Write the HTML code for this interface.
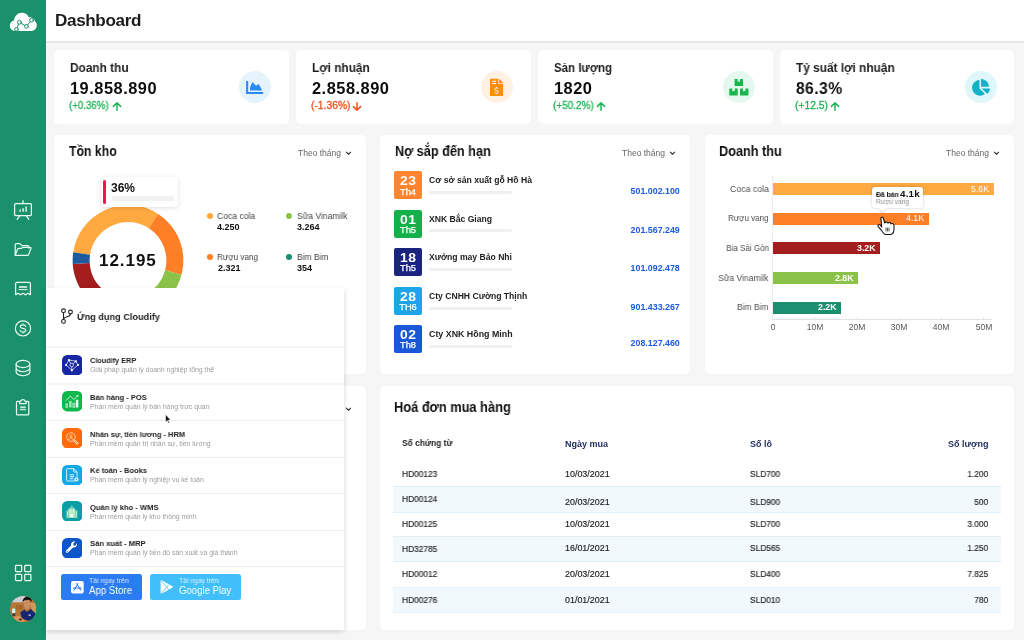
<!DOCTYPE html>
<html lang="vi">
<head>
<meta charset="utf-8">
<title>Dashboard</title>
<style>
*{box-sizing:border-box;margin:0;padding:0}
html,body{width:1024px;height:640px;overflow:hidden}
body{font-family:"Liberation Sans",sans-serif;background:#f6f6f6;color:#111;position:relative}
.abs{position:absolute}
.t{will-change:transform;position:absolute;white-space:nowrap;line-height:1;transform:scaleX(var(--sx,1));transform-origin:left center}
.t.r{transform-origin:right center}
.b{font-weight:700}
#side{left:0;top:0;width:46px;height:640px;background:#1a906b}
#head{left:46px;top:0;width:978px;height:43px;background:#fff;border-bottom:2px solid #e7e7e7}
.card{position:absolute;background:#fff;border-radius:5px}
.kpi{top:50px;width:235px;height:74px}
.kc{position:absolute;top:21px;width:32px;height:32px;border-radius:50%}
.panel-title{font-size:14.5px;font-weight:700;color:#111}
.sel{font-size:8.5px;color:#666}
.dot{position:absolute;width:6px;height:6px;border-radius:50%}
.lg{font-size:9px;color:#444}
.lgv{font-size:9px;font-weight:700;color:#111}
.dbox{position:absolute;left:14px;width:28px;height:28px;border-radius:2px;color:#fff;text-align:center}
.dbox b{will-change:transform;display:block;font-size:12.200px;line-height:10px;margin-top:5.200px;letter-spacing:.6px;transform:scaleX(1.14);padding-left:.6px}
.dbox span{will-change:transform;display:block;font-size:8.600px;line-height:9px;margin-top:1.100px;transform:scaleX(1.08);-webkit-text-stroke:.25px #fff}
.dn{font-size:8.600px;font-weight:700;color:#222;left:48.900px}
.dbar{position:absolute;left:49px;width:83px;height:3px;background:#f0f0f0;border-radius:2px}
.amt{font-size:8.600px;font-weight:700;color:#1a5be0;right:10px;--sx:1.03}
.bl{font-size:9px;color:#4f4f4f;right:245.200px;--sx:.94}
.bar{position:absolute;height:12px}
.bv{will-change:transform;position:absolute;right:4.600px;top:1.900px;font-size:8.800px;color:#fff;line-height:9px}
.ax{font-size:8.500px;color:#555}
#pop{left:46px;top:288px;width:298px;height:342px;background:#fff;box-shadow:0 1.500px 5px rgba(0,0,0,.17)}
.row{position:absolute;left:0;width:298px;height:37px;border-top:1px solid #ececec}
.ai{position:absolute;left:15px;top:8px;width:21px;height:21px;border-radius:5px}
.an{position:absolute;left:44px;top:9px;font-size:8.5px;font-weight:700;color:#222;white-space:nowrap;line-height:1}
.as{position:absolute;left:44px;top:19px;font-size:7.2px;color:#9a9a9a;white-space:nowrap;line-height:1}
.th{font-size:9px;font-weight:700;color:#1d2b5e}
.td{font-size:8.500px;color:#222;--sx:.98;margin-top:.6px;-webkit-text-stroke:.15px #222}
.td.d{--sx:1.05}
.tr{position:absolute;left:14px;width:607px;height:25px}
.tr.s{background:#f1f8fe;border-top:1px solid #dcecf8;border-bottom:1px solid #dcecf8}
</style>
</head>
<body>
<!-- SIDEBAR -->
<div id="side" class="abs">
<svg class="abs" style="left:0;top:0" width="46" height="640" viewBox="0 0 46 640" fill="none" stroke="#eafaf3" stroke-width="1.25" stroke-linecap="round" stroke-linejoin="round">
<!-- logo cloud -->
<path d="M15.5 31 C11.8 31 9.8 28.3 9.8 25.6 C9.8 22.9 11.6 20.9 14 20.5 C14.6 16 17.8 12.8 21.8 12.8 C25.2 12.8 27.6 14.6 28.8 17.2 C32.2 16.8 34.6 18.6 35 21.2 C36.4 22.2 36.8 24 36.8 25.6 C36.8 28.6 34.4 31 31.4 31 Z" fill="#fff" stroke="none"/>
<g stroke="#1a906b" stroke-width="1" fill="#fff">
<path d="M16.4 29.2 L19.4 22.4 L26.4 26.4 L31.4 20.2" fill="none"/>
<circle cx="16.400" cy="29.300" r="1.800"/><circle cx="19.400" cy="22.300" r="1.900"/><circle cx="26.400" cy="26.400" r="1.900"/><circle cx="31.500" cy="20.200" r="1.900"/>
</g>
<!-- presentation -->
<rect x="14.6" y="203.6" width="16.8" height="12" rx="1"/>
<path d="M23 200.6v3M19.6 215.8l-2.4 3.6M26.4 215.8l2.4 3.6"/>
<path d="M20.1 209.4v2.4M23.1 208.2v3.6M26.1 206.6v5.200" stroke-width="1.600" stroke-linecap="butt" stroke="#cfeee2"/>
<!-- folder -->
<path d="M15.2 253.500V244.800c0-.7.500-1.200 1.200-1.200h3.400l2 2h5.800c.7 0 1.200.5 1.200 1.200v1.400"/>
<path d="M15.100 255.200l2.500-6c.2-.5.600-.8 1.100-.8l2.900-.1 1.600-1h6.800c.8 0 1.200.6.900 1.300l-2.300 6c-.2.500-.600.800-1.100.8H16c-.7 0-1.100-.5-.9-1.200z"/>
<!-- receipt -->
<path d="M15.600 294.600V283.800c0-.8.600-1.400 1.400-1.400h12c.8 0 1.400.6 1.400 1.400v10.800c-.8 0-1.200-1.100-2.470-1.100s-1.670 1.100-2.470 1.100-1.200-1.100-2.460-1.100-1.670 1.100-2.470 1.100-1.200-1.100-2.470-1.100-1.660 1.100-2.460 1.100z"/>
<path d="M19 287h8" stroke-width="1.800" stroke-linecap="butt" stroke="#cfeee2"/><path d="M19 289.600h8" stroke-width="1"/>
<!-- dollar -->
<circle cx="23" cy="328.400" r="7.600" stroke-width="1.150"/>
<path d="M25.700 326.500c-.3-1-1.300-1.600-2.700-1.600-1.600 0-2.700.7-2.700 1.800 0 2.400 5.500 1 5.500 3.500 0 1.200-1.200 1.900-2.800 1.900-1.500 0-2.600-.6-2.900-1.700M23 323.900v1M23 332.100v1" stroke-width="1.100"/>
<!-- database -->
<ellipse cx="23" cy="364" rx="6.900" ry="3.700" stroke-width="1.150"/>
<path d="M16.100 364v8c0 2 3.100 3.700 6.900 3.700s6.900-1.700 6.900-3.700v-8M16.100 368c0 2 3.100 3.700 6.900 3.700s6.900-1.700 6.900-3.700" stroke-width="1.150"/>
<!-- clipboard -->
<path d="M19.600 401.400h-2.200c-.5 0-.9.400-.9.900v11.700c0 .5.400.9.900.9h10.500c.5 0 .9-.4.900-.9v-11.700c0-.5-.4-.9-.9-.9h-2.200"/>
<path d="M19.600 403.500v-1.700c0-.3.200-.5.500-.5h.6c.3-1.100 1.200-1.800 2.200-1.800s1.900.7 2.200 1.800h.6c.3 0 .5.200.5.500v1.700z"/>
<path d="M20.200 407.300h5.500" stroke-width="1.800" stroke-linecap="butt" stroke="#cfeee2"/><path d="M20.200 409.700h5.500" stroke-width="1"/>
<!-- grid -->
<g stroke-width="1.250"><rect x="15.500" y="565.400" width="6.200" height="6.200" rx=".8"/><rect x="24.700" y="565.400" width="6.200" height="6.200" rx=".8"/><rect x="15.500" y="574.400" width="6.200" height="6.200" rx=".8"/><rect x="24.700" y="574.400" width="6.200" height="6.200" rx=".8"/></g>
</svg>
<!-- avatar -->
<svg class="abs" style="left:9.900px;top:596px" width="26.400" height="26.400" viewBox="0 0 26.400 26.400">
<defs><clipPath id="av"><circle cx="13.200" cy="13.200" r="13.200"/></clipPath><filter id="avb" x="-10%" y="-10%" width="120%" height="120%"><feGaussianBlur stdDeviation=".45"/></filter></defs>
<g clip-path="url(#av)"><g filter="url(#avb)">
<rect x="-2" y="-2" width="31" height="31" fill="#b87638"/>
<path d="M-2 -2h17v8.300H-2z" fill="#cfccd6"/>
<path d="M20 7h9v9l-6 1z" fill="#d29a5a"/>
<path d="M6 9h7v5H6z" fill="#a9682f"/>
<ellipse cx="17.100" cy="8.600" rx="3.200" ry="4.700" fill="#c98b5f"/>
<path d="M12.700 6.400c-.4-3.300 1.700-5.300 4.700-5.300 2.900 0 4.800 1.800 4.300 5.200-.6-1.500-1.500-2.500-4.300-2.500-2.300 0-3.700.9-4.700 2.600z" fill="#15110f"/>
<path d="M10.300 16.400l4.200-2.800 2.400 2.300 3.700-2.800 4.700 3.800-.9 5.600-6.100 2.300-6.600-2.300z" fill="#14256f"/>
<path d="M18.500 18.500h2.300v1.300h-2.300z" fill="#c9d2ea"/>
<rect x="2.100" y="12.600" width="3.100" height="4.800" rx=".5" fill="#dfe9f2"/>
<rect x="2.400" y="17.300" width="2.800" height="2.800" fill="#3b3a3e"/>
<path d="M4 21c3-1.500 6-1 8 1l3 3-3 3H5z" fill="#d8945c"/>
<rect x="9.300" y="22.600" width="2.200" height="1.700" fill="#16120f"/>
</g></g></svg>
</div>
<!-- HEADER -->
<div id="head" class="abs"><span class="t b" style="left:9px;top:11.700px;font-size:17.100px;letter-spacing:-.36px;color:#1c1c1c">Dashboard</span></div>

<!-- KPI CARDS -->
<div class="card kpi" style="left:54px" id="k1"><span class="t b" style="left:16px;top:11.900px;font-size:12.500px;color:#1c1c1c;--sx:.948">Doanh thu</span><span class="t b" style="left:16px;top:30.200px;font-size:16.400px;color:#0d0d0d;letter-spacing:.5px">19.858.890</span><span class="t" style="left:15.300px;top:51px;font-size:10.300px;color:#1cb454;-webkit-text-stroke:.3px #1cb454;--sx:.94">(+0.36%)</span><svg class="abs" style="left:57.700px;top:51.700px" width="10" height="9" viewBox="0 0 10 9" fill="none" stroke="#1cb454" stroke-width="1.500" stroke-linecap="round" stroke-linejoin="round"><path d="M5 8.200V1M1.400 4.400L5 .9l3.600 3.500"/></svg><div class="kc" style="left:185px;background:#e5f3fd"><svg width="32" height="32" viewBox="0 0 32 32" fill="#2a8bf5"><path d="M7.100 10h2.100v10.900h15v2H7.100z"/><path d="M11 19.400V16.300L13.500 11l3.500 3.750L19.750 13l3.450 6.400z"/></svg></div></div>
<div class="card kpi" style="left:296px" id="k2"><span class="t b" style="left:16px;top:11.900px;font-size:12.500px;color:#1c1c1c;--sx:.948">Lợi nhuận</span><span class="t b" style="left:16px;top:30.200px;font-size:16.400px;color:#0d0d0d;letter-spacing:.5px">2.858.890</span><span class="t" style="left:15.300px;top:51px;font-size:10.300px;color:#f4511e;-webkit-text-stroke:.3px #f4511e;--sx:1">(-1.36%)</span><svg class="abs" style="left:56.400px;top:51.700px" width="10" height="9" viewBox="0 0 10 9" fill="none" stroke="#f4511e" stroke-width="1.500" stroke-linecap="round" stroke-linejoin="round"><path d="M5 .8V8M1.400 4.600L5 8.100l3.600-3.500"/></svg><div class="kc" style="left:185px;background:#fff1e2"><svg width="32" height="32" viewBox="0 0 32 32" fill="#ff8d0a"><path d="M9.600 7.750H17.200V12.300c0 .4.300.7.700.7H22.100V24.400c0 .3-.3.600-.6.600H9.600c-.3 0-.6-.3-.6-.6V8.350c0-.3.300-.6.600-.6z"/><path d="M18 7.750l4.100 4.100v.3H18z"/><path d="M11.300 9.800h3.700v1h-3.700zM11.300 12h3.700v1h-3.700z" fill="#fff"/><path d="M17.200 17.900c-.3-.6-.9-.9-1.700-.9-1 0-1.700.5-1.700 1.300 0 1.700 3.500.8 3.500 2.600 0 .8-.7 1.300-1.800 1.300-.9 0-1.600-.4-1.800-1M15.550 16v1M15.550 22.200v1" fill="none" stroke="#fff" stroke-width="1"/></svg></div></div>
<div class="card kpi" style="left:538px" id="k3"><span class="t b" style="left:16px;top:11.900px;font-size:12.500px;color:#1c1c1c;--sx:.92">Sản lượng</span><span class="t b" style="left:16px;top:30.200px;font-size:16.400px;color:#0d0d0d;letter-spacing:.5px">1820</span><span class="t" style="left:15.300px;top:51px;font-size:10.300px;color:#1cb454;-webkit-text-stroke:.3px #1cb454;--sx:.965">(+50.2%)</span><svg class="abs" style="left:57.700px;top:51.700px" width="10" height="9" viewBox="0 0 10 9" fill="none" stroke="#1cb454" stroke-width="1.500" stroke-linecap="round" stroke-linejoin="round"><path d="M5 8.200V1M1.400 4.400L5 .9l3.600 3.500"/></svg><div class="kc" style="left:185px;background:#e5f8ee"><svg width="32" height="32" viewBox="0 0 32 32" fill="#15b74c"><path d="M11.60 8.10h3v2.900l1.200-.8 1.200.8v-2.900h3v6.900h-8.400zM6.30 17.60h3v2.900l1.200-.8 1.200.8v-2.900h3v6.900h-8.400zM17.00 17.60h3v2.900l1.200-.8 1.200.8v-2.900h3v6.900h-8.400z"/></svg></div></div>
<div class="card kpi" style="left:780px;width:234px" id="k4"><span class="t b" style="left:16px;top:11.900px;font-size:12.500px;color:#1c1c1c;--sx:.948">Tỷ suất lợi nhuận</span><span class="t b" style="left:16px;top:30.200px;font-size:16.400px;color:#0d0d0d;letter-spacing:.5px;--sx:.95">86.3%</span><span class="t" style="left:15.300px;top:51px;font-size:10.300px;color:#1cb454;-webkit-text-stroke:.3px #1cb454;--sx:1">(+12.5)</span><svg class="abs" style="left:50.200px;top:51.700px" width="10" height="9" viewBox="0 0 10 9" fill="none" stroke="#1cb454" stroke-width="1.500" stroke-linecap="round" stroke-linejoin="round"><path d="M5 8.200V1M1.400 4.400L5 .9l3.600 3.500"/></svg><div class="kc" style="left:185px;background:#dff6fb"><svg width="32" height="32" viewBox="0 0 32 32" fill="#10b4c8"><g transform="translate(7.100 7.900) scale(.0329)"><path d="M527.790 288H290.500l158.030 158.030c6.040 6.040 15.980 6.530 22.190.68 38.700-36.460 65.320-85.610 73.130-140.860 1.340-9.460-6.510-17.850-16.060-17.850zm-15.830-64.800C503.720 103.740 408.260 8.280 288.800.04 279.680-.59 272 7.100 272 16.240V240h223.770c9.140 0 16.820-7.680 16.190-16.800zM224 288V50.710c0-9.550-8.390-17.400-17.840-16.060C86.990 51.490-4.100 155.600.14 280.370 4.500 408.510 114.830 513.590 243.030 511.980c50.400-.63 96.970-16.870 135.260-44.030 7.900-5.600 8.420-17.230 1.570-24.080L224 288z"/></g></svg></div></div>

<!-- PANELS -->
<div class="card" id="p1" style="left:54px;top:135px;width:312px;height:239px"><span class="t b" style="left:15.400px;top:9.500px;font-size:13.800px;--sx:.89">Tồn kho</span><span class="t sel" style="left:244px;top:13.800px">Theo tháng</span><svg class="abs" style="left:290.600px;top:16.400px" width="7" height="5" viewBox="0 0 7 5" fill="none" stroke="#222" stroke-width="1.050" stroke-linecap="round" stroke-linejoin="round"><path d="M1.400 1.200l2.100 2.100 2.100-2.100"/></svg><svg class="abs" style="left:0;top:0" width="312" height="239" viewBox="0 0 312 239"><path d="M27.62 118.47A46.90 46.90 0 0 1 99.54 86.07" stroke="#ffa940" stroke-width="17" fill="none"/><path d="M99.54 86.07A46.90 46.90 0 0 1 119.30 137.54" stroke="#ff7f27" stroke-width="17" fill="none"/><path d="M119.30 137.54A46.90 46.90 0 0 1 96.02 166.81" stroke="#8bc34a" stroke-width="17" fill="none"/><path d="M96.02 166.81A46.90 46.90 0 0 1 83.75 171.28" stroke="#1a9070" stroke-width="17" fill="none"/><path d="M83.75 171.28A46.90 46.90 0 0 1 27.20 128.51" stroke="#a41e1e" stroke-width="17" fill="none"/><path d="M27.20 128.51A46.90 46.90 0 0 1 27.62 118.47" stroke="#1e5a9e" stroke-width="17" fill="none"/></svg><span class="t b" style="left:44.600px;top:117.300px;font-size:17px;letter-spacing:.95px;color:#111">12.195</span><div class="abs" style="left:47px;top:42px;width:77px;height:30px;background:#fff;border-radius:3px;box-shadow:0 1px 4px rgba(0,0,0,.13)"><div class="abs" style="left:2px;top:3px;width:3px;height:24px;border-radius:1.500px;background:#f5134a"></div><span class="t b" style="left:9.600px;top:5.400px;font-size:12px;color:#111">36%</span><div class="abs" style="left:10.500px;top:19px;width:62.500px;height:5px;border-radius:1.500px;background:#f1f1f1"></div></div><div class="dot" style="left:152.500px;top:77.500px;background:#ffa940"></div><span class="t lg" style="left:163px;top:77.100px;--sx:.955">Coca cola</span><span class="t lgv" style="left:162.500px;top:87.500px;letter-spacing:0">4.250</span><div class="dot" style="left:231.500px;top:77.500px;background:#8bc34a"></div><span class="t lg" style="left:242.700px;top:77.100px;--sx:.943">Sữa Vinamilk</span><span class="t lgv" style="left:243px;top:87.500px;letter-spacing:0">3.264</span><div class="dot" style="left:152.500px;top:118.500px;background:#ff7f27"></div><span class="t lg" style="left:163px;top:118.100px;--sx:.9">Rượu vang</span><span class="t lgv" style="left:163.500px;top:128.500px;letter-spacing:0">2.321</span><div class="dot" style="left:231.500px;top:118.500px;background:#1a9070"></div><span class="t lg" style="left:242.700px;top:118.100px;--sx:.94">Bim Bim</span><span class="t lgv" style="left:243px;top:128.500px;letter-spacing:0">354</span></div>
<div class="card" id="p2" style="left:380px;top:135px;width:310px;height:239px"><span class="t b" style="left:14.500px;top:9.500px;font-size:13.800px;--sx:.92">Nợ sắp đến hạn</span><span class="t sel" style="left:242.300px;top:13.800px">Theo tháng</span><svg class="abs" style="left:289.100px;top:16.400px" width="7" height="5" viewBox="0 0 7 5" fill="none" stroke="#222" stroke-width="1.050" stroke-linecap="round" stroke-linejoin="round"><path d="M1.400 1.200l2.100 2.100 2.100-2.100"/></svg><div class="dbox" style="top:36.3px;background:#ff8430"><b>23</b><span>Th4</span></div><span class="t dn" style="top:41.47px">Cơ sở sản xuất gỗ Hồ Hà</span><div class="dbar" style="top:55.8px"></div><span class="t r amt" style="top:51.82px">501.002.100</span><div class="dbox" style="top:74.8px;background:#16b04a"><b>01</b><span>Th5</span></div><span class="t dn" style="top:79.97px">XNK Bắc Giang</span><div class="dbar" style="top:94.3px"></div><span class="t r amt" style="top:91.42px">201.567.249</span><div class="dbox" style="top:113.0px;background:#1a237e"><b>18</b><span>Th5</span></div><span class="t dn" style="top:118.17px">Xưởng may Bảo Nhi</span><div class="dbar" style="top:132.5px"></div><span class="t r amt" style="top:128.72px">101.092.478</span><div class="dbox" style="top:151.7px;background:#1ea5e9"><b>28</b><span>TH6</span></div><span class="t dn" style="top:156.87px">Cty CNHH Cường Thịnh</span><div class="dbar" style="top:172px"></div><span class="t r amt" style="top:167.92px">901.433.267</span><div class="dbox" style="top:190.0px;background:#1857d8"><b>02</b><span>Th8</span></div><span class="t dn" style="top:195.17px;--sx:1.03">Cty XNK Hồng Minh</span><div class="dbar" style="top:209.5px"></div><span class="t r amt" style="top:203.62px">208.127.460</span></div>
<div class="card" id="p3" style="left:705px;top:135px;width:309px;height:239px"><span class="t b" style="left:14.200px;top:9.500px;font-size:13.800px;--sx:.92">Doanh thu</span><span class="t sel" style="left:241.200px;top:13.800px">Theo tháng</span><svg class="abs" style="left:288.100px;top:16.400px" width="7" height="5" viewBox="0 0 7 5" fill="none" stroke="#222" stroke-width="1.050" stroke-linecap="round" stroke-linejoin="round"><path d="M1.400 1.200l2.100 2.100 2.100-2.100"/></svg><div class="abs" style="left:67px;top:41px;width:1px;height:143px;background:#ececec"></div><div class="abs" style="left:67px;top:184px;width:220px;height:1px;background:#e2e2e2"></div><div class="abs" style="left:67.3px;top:182px;width:1px;height:2px;background:#e2e2e2"></div><div class="abs" style="left:109.4px;top:182px;width:1px;height:2px;background:#e2e2e2"></div><div class="abs" style="left:151.6px;top:182px;width:1px;height:2px;background:#e2e2e2"></div><div class="abs" style="left:193.8px;top:182px;width:1px;height:2px;background:#e2e2e2"></div><div class="abs" style="left:235.9px;top:182px;width:1px;height:2px;background:#e2e2e2"></div><div class="abs" style="left:278.1px;top:182px;width:1px;height:2px;background:#e2e2e2"></div><span class="t r bl" style="top:50.08px;--sx:.975">Coca cola</span><div class="bar" style="left:67.500px;top:48.1px;width:221.4px;background:#ffa940"><span class="bv">5.6K</span></div><span class="t r bl" style="top:79.48px;--sx:.89">Rượu vang</span><div class="bar" style="left:67.500px;top:77.5px;width:156.6px;background:#ff7f27"><span class="bv">4.1K</span></div><span class="t r bl" style="top:108.88px;--sx:.89">Bia Sài Gòn</span><div class="bar" style="left:67.500px;top:106.9px;width:107.6px;background:#a41e1e"><span class="bv" style="font-weight:700">3.2K</span></div><span class="t r bl" style="top:138.98px">Sữa Vinamilk</span><div class="bar" style="left:67.500px;top:137.0px;width:85.5px;background:#8bc34a"><span class="bv" style="font-weight:700">2.8K</span></div><span class="t r bl" style="top:168.48px">Bim Bim</span><div class="bar" style="left:67.500px;top:166.5px;width:68.8px;background:#1a9070"><span class="bv" style="font-weight:700">2.2K</span></div><span class="t ax" style="left:67.8px;top:188.300px;width:40px;text-align:center;margin-left:-20px;transform-origin:center">0</span><span class="t ax" style="left:109.9px;top:188.300px;width:40px;text-align:center;margin-left:-20px;transform-origin:center">10M</span><span class="t ax" style="left:152.1px;top:188.300px;width:40px;text-align:center;margin-left:-20px;transform-origin:center">20M</span><span class="t ax" style="left:194.2px;top:188.300px;width:40px;text-align:center;margin-left:-20px;transform-origin:center">30M</span><span class="t ax" style="left:236.4px;top:188.300px;width:40px;text-align:center;margin-left:-20px;transform-origin:center">40M</span><span class="t ax" style="left:278.6px;top:188.300px;width:40px;text-align:center;margin-left:-20px;transform-origin:center">50M</span><div class="abs" style="left:167px;top:52px;width:51px;height:21px;background:#fff;border-radius:3px;box-shadow:0 0 3px rgba(0,0,0,.22)"><div class="abs" style="left:8px;top:18.500px;width:5px;height:5px;background:#fff;transform:rotate(45deg);box-shadow:1px 1px 1.500px rgba(0,0,0,.15)"></div><div class="abs" style="left:2px;top:14px;width:20px;height:7px;background:#fff"></div><span class="t b" style="left:3.800px;top:4.100px;font-size:7.400px;color:#111;--sx:.92">Đã bán</span><span class="t b" style="left:28px;top:2px;font-size:9.800px;color:#111;letter-spacing:.2px">4.1k</span><span class="t" style="left:3.800px;top:12.100px;font-size:6.800px;color:#8e8e8e;--sx:.96">Rượu vang</span></div><svg class="abs" style="left:172px;top:81px" width="19" height="20" viewBox="0 0 19 20"><path d="M4.700 11L3.900 2.600C3.800 1.200 5.900.8 6.300 2.200L7.700 7C8.600 5.400 10.600 5.600 10.900 7.200 11.800 6 13.600 6.400 13.900 7.900 15 7 16.900 7.600 17 9.400V14C17 16 15.800 17.600 14.400 18.400H7.800C6.400 17.400 4.600 14.600 3.600 13.400L1.200 10.600C.4 9.400 1.800 8 3 8.800z" fill="#fff" stroke="#111" stroke-width="1.050" stroke-linejoin="round"/><path d="M9 11.600v3.800M10.500 11.600v3.800M12 11.600v3.800" stroke="#111" stroke-width=".7" fill="none"/></svg></div>
<div class="card" id="p4" style="left:54px;top:386px;width:312px;height:244px"><span class="t sel" style="left:244px;top:18.800px">Theo tháng</span><svg class="abs" style="left:290.600px;top:21.400px" width="7" height="5" viewBox="0 0 7 5" fill="none" stroke="#222" stroke-width="1.050" stroke-linecap="round" stroke-linejoin="round"><path d="M1.400 1.200l2.100 2.100 2.100-2.100"/></svg></div>
<div class="card" id="p5" style="left:380px;top:386px;width:634px;height:244px"><span class="t b" style="left:13.500px;top:14.900px;font-size:13.800px;--sx:.93">Hoá đơn mua hàng</span><div class="abs" style="left:13px;top:100.4px;width:608px;height:26.800px;background:#f2f9fd;border-top:1px solid #e2eff8;border-bottom:1px solid #e2eff8"></div><div class="abs" style="left:13px;top:150.4px;width:608px;height:25.4px;background:#f2f9fd;border-top:1px solid #e2eff8;border-bottom:1px solid #e2eff8"></div><div class="abs" style="left:13px;top:201.0px;width:608px;height:25.6px;background:#f2f9fd;border-top:1px solid #e2eff8;border-bottom:1px solid #e2eff8"></div><span class="t th" style="left:22.100px;top:52.48px;color:#222;--sx:.935;margin-top:.4px">Số chứng từ</span><span class="t th" style="left:184.700px;top:54.38px">Ngày mua</span><span class="t th" style="left:369.500px;top:54.38px">Số lô</span><span class="t r th" style="right:25.6px;top:54.18px">Số lượng</span><span class="t td" style="left:22.100px;top:83.40px">HD00123</span><span class="t td d" style="left:184.700px;top:83.00px">10/03/2021</span><span class="t td" style="left:369.500px;top:83.00px">SLD700</span><span class="t r td" style="right:25.8px;top:83.00px">1.200</span><span class="t td" style="left:22.100px;top:108.70px">HD00124</span><span class="t td d" style="left:184.700px;top:111.00px">20/03/2021</span><span class="t td" style="left:369.500px;top:111.00px">SLD900</span><span class="t r td" style="right:25.8px;top:111.00px">500</span><span class="t td" style="left:22.100px;top:133.80px">HD00125</span><span class="t td d" style="left:184.700px;top:133.80px">10/03/2021</span><span class="t td" style="left:369.500px;top:133.80px">SLD700</span><span class="t r td" style="right:25.8px;top:133.80px">3.000</span><span class="t td" style="left:22.100px;top:158.00px">HD32785</span><span class="t td d" style="left:184.700px;top:157.80px">16/01/2021</span><span class="t td" style="left:369.500px;top:157.80px">SLD565</span><span class="t r td" style="right:25.8px;top:157.80px">1.250</span><span class="t td" style="left:22.100px;top:183.80px">HD00012</span><span class="t td d" style="left:184.700px;top:183.50px">20/03/2021</span><span class="t td" style="left:369.500px;top:183.50px">SLD400</span><span class="t r td" style="right:25.8px;top:183.50px">7.825</span><span class="t td" style="left:22.100px;top:209.30px">HD00276</span><span class="t td d" style="left:184.700px;top:209.00px">01/01/2021</span><span class="t td" style="left:369.500px;top:209.00px">SLD010</span><span class="t r td" style="right:25.8px;top:209.00px">780</span></div>

<!-- POPUP -->
<div id="pop" class="abs"><svg class="abs" style="left:13px;top:19px" width="16" height="18" viewBox="0 0 16 18" fill="none" stroke="#222" stroke-width="1.100" stroke-linecap="round"><circle cx="4.500" cy="3.800" r="1.900"/><circle cx="4.500" cy="14.400" r="1.900"/><circle cx="11.500" cy="5" r="1.900"/><path d="M4.500 5.700v6.800M11.500 6.900c0 3.400-7 2.300-7 5.600"/></svg><span class="t b" style="left:30.800px;top:23.900px;font-size:9.800px;color:#222;--sx:.935">Ứng dụng Cloudify</span><div class="abs" style="left:0;top:58px;width:298px;height:2px;background:#f5f5f5"></div><svg class="abs" style="left:15.500px;top:66.9px" width="20.400" height="20.400" viewBox="0 0 20.400 20.400"><rect width="20.400" height="20.400" rx="5.300" fill="#1726a2"/><g stroke="#fff" stroke-width=".7" fill="none"><path d="M6.900 5L13.900 6.300 16 10 9.900 15.300 4.100 10z"/><circle cx="9.700" cy="10" r="1.800"/><path d="M9.800 11.800v3.500M6.900 5l1.800 3.500M13.900 6.300l-2.800 2.500"/></g><g fill="#fff"><circle cx="6.900" cy="5" r="1.100"/><circle cx="13.900" cy="6.300" r="1.100"/><circle cx="4.100" cy="10" r="1.100"/><circle cx="16" cy="10" r="1.100"/><circle cx="9.900" cy="15.300" r="1.100"/></g></svg><span class="t b" style="left:43.800px;top:68.15px;font-size:7.800px;color:#222;--sx:0.937;margin-top:.8px">Cloudify ERP</span><span class="t" style="left:43.800px;top:78.41px;font-size:6.900px;color:#9c9c9c;margin-top:.5px">Giải pháp quản lý doanh nghiệp tổng thể</span><div class="abs" style="left:0;top:95px;width:298px;height:2px;background:#f5f5f5"></div><svg class="abs" style="left:15.500px;top:103.4px" width="20.400" height="20.400" viewBox="0 0 20.400 20.400"><rect width="20.400" height="20.400" rx="5.300" fill="#0db84c"/><path d="M3.600 9.800L8.500 5.200 11.800 8.400 16 4.500" stroke="#fff" stroke-width=".8" fill="none"/><path d="M14.300 4.200l2.100-.2-.3 2.100z" fill="#fff"/><rect x="3.900" y="12.900" width="1.700" height="3.400" stroke="#d6f5e0" stroke-width=".7" fill="none"/><rect x="7.100" y="9.900" width="2.500" height="6.600" fill="#9fe6b8"/><rect x="10.900" y="12.200" width="1.900" height="4.100" stroke="#d6f5e0" stroke-width=".7" fill="#4fcf7e"/><rect x="13.900" y="8.700" width="2.400" height="7.800" fill="#fff"/></svg><span class="t b" style="left:43.800px;top:105.15px;font-size:7.800px;color:#222;--sx:0.961;margin-top:.8px">Bán hàng - POS</span><span class="t" style="left:43.800px;top:115.41px;font-size:6.900px;color:#9c9c9c;margin-top:.5px">Phần mềm quản lý bán hàng trực quan</span><div class="abs" style="left:0;top:132.2px;width:298px;height:1px;background:#eee"></div><svg class="abs" style="left:15.500px;top:139.9px" width="20.400" height="20.400" viewBox="0 0 20.400 20.400"><rect width="20.400" height="20.400" rx="5.300" fill="#ff6a0a"/><g stroke="#ffe3cf" fill="none"><circle cx="9" cy="9.100" r="4.300" stroke-width=".8"/><path d="M11.900 12.400l3.400 2.900" stroke-width="2.200" stroke-linecap="round"/><path d="M11.900 12.400l3.400 2.900" stroke="#ff6a0a" stroke-width=".8" stroke-linecap="round"/><circle cx="9" cy="8.300" r="1.100" stroke-width=".7"/><path d="M6.800 12c.2-1.400 1-2.200 2.200-2.200s2 .8 2.200 2.200" stroke-width=".7"/></g></svg><span class="t b" style="left:43.800px;top:141.85px;font-size:7.800px;color:#222;--sx:0.955;margin-top:.8px">Nhân sự, tiền lương - HRM</span><span class="t" style="left:43.800px;top:152.11px;font-size:6.900px;color:#9c9c9c;margin-top:.5px">Phần mềm quản trị nhân sự, tiền lương</span><div class="abs" style="left:0;top:168.6px;width:298px;height:1px;background:#eee"></div><svg class="abs" style="left:15.500px;top:176.6px" width="20.400" height="20.400" viewBox="0 0 20.400 20.400"><rect width="20.400" height="20.400" rx="5.300" fill="#15a8e8"/><g stroke="#e8f6fd" stroke-width=".9" fill="none" stroke-linejoin="round"><path d="M13 16H5.400c-.4 0-.8-.3-.8-.8V4.500c0-.4.300-.8.800-.8h6.400l3.300 3.200v4.900"/><path d="M11.600 3.800v2.600c0 .4.300.6.600.6h2.800"/><path d="M7.800 9.900h4.200M7.800 11.800h4.200M7.800 13.700h3.200" stroke-width="1"/></g><circle cx="14.400" cy="14.400" r="2.100" fill="#e8f6fd"/><path d="M13.800 13.300l1.800 1.100-1.800 1.100z" fill="#15a8e8"/></svg><span class="t b" style="left:43.800px;top:178.25px;font-size:7.800px;color:#222;--sx:0.959;margin-top:.8px">Kế toán - Books</span><span class="t" style="left:43.800px;top:188.51px;font-size:6.900px;color:#9c9c9c;margin-top:.5px">Phần mềm quản lý nghiệp vụ kế toán</span><div class="abs" style="left:0;top:205.3px;width:298px;height:1px;background:#eee"></div><svg class="abs" style="left:15.500px;top:212.9px" width="20.400" height="20.400" viewBox="0 0 20.400 20.400"><rect width="20.400" height="20.400" rx="5.300" fill="#0b9ea8"/><g fill="#b4ecc2"><path d="M6.400 7.500h6.800v9.100H6.400z"/><path d="M4.500 9.600h1.900v7H4.500zM13.200 9.600h2.100v7h-2.100z" opacity=".85"/><path d="M7.700 7.500c0-1.300.9-2.200 2.100-2.200s2.100.9 2.100 2.200z" opacity=".6"/><path d="M9.500 3.800h.6v1.600h-.6z" opacity=".6"/><path d="M3.900 16.400h12v.5h-12z"/></g><g fill="#fff"><path d="M8.500 13.100h2.600v3.300H8.500z"/><path d="M7.300 8.400h.9v.9h-.9zM9.300 8.400h.9v.9h-.9zM11.300 8.400h.9v.9h-.9zM7.300 10.400h.9v.9h-.9zM9.300 10.400h.9v.9h-.9zM11.300 10.400h.9v.9h-.9zM5 12.100h.9v.9H5zM13.800 12.100h.9v.9h-.9z" opacity=".9"/></g></svg><span class="t b" style="left:43.800px;top:214.95px;font-size:7.800px;color:#222;--sx:0.969;margin-top:.8px">Quản lý kho - WMS</span><span class="t" style="left:43.800px;top:225.21px;font-size:6.900px;color:#9c9c9c;margin-top:.5px">Phần mềm quản lý kho thông minh</span><div class="abs" style="left:0;top:241.7px;width:298px;height:1px;background:#eee"></div><svg class="abs" style="left:15.500px;top:249.7px" width="20.400" height="20.400" viewBox="0 0 20.400 20.400"><rect width="20.400" height="20.400" rx="5.300" fill="#0d56c9"/><path d="M14.900 5.300c.2.600.2 1.300 0 1.900-.5 1.600-2.200 2.600-3.900 2.200l-5 5c-.5.500-1.400.5-1.900 0s-.5-1.400 0-1.900l5-5c-.4-1.600.5-3.300 2.200-3.900.7-.2 1.400-.2 2 0l-2.100 2.100.4 1.700 1.700.4z" fill="#fff"/><circle cx="5.100" cy="13.500" r=".55" fill="#0d56c9"/></svg><span class="t b" style="left:43.800px;top:251.35px;font-size:7.800px;color:#222;--sx:0.981;margin-top:.8px">Sản xuất - MRP</span><span class="t" style="left:43.800px;top:261.61px;font-size:6.900px;color:#9c9c9c;margin-top:.5px">Phần mềm quản lý tiến độ sản xuất và giá thành</span><div class="abs" style="left:0;top:278.3px;width:298px;height:1px;background:#eee"></div><div class="abs" style="left:15px;top:286px;width:81px;height:26px;border-radius:2.500px;background:#2b7bf3"><svg class="abs" style="left:9.600px;top:6.700px" width="13" height="13" viewBox="0 0 13 13"><rect width="12.700" height="12.400" rx="1.800" fill="#fff"/><path d="M6.700 2.600L3.600 8.600M5.900 2.600l3.300 6M2.400 7h8M2.900 9.200l.5-.9M9.900 9.200l-.5-.9" stroke="#2b7bf3" stroke-width="1" fill="none" stroke-linecap="round"/></svg><span class="t" style="left:27.800px;top:3.27px;font-size:7px;color:#d6e5fd;--sx:.967">Tải ngay trên</span><span class="t" style="left:27.800px;top:12.100px;font-size:10px;color:#fff;--sx:.967">App Store</span></div><div class="abs" style="left:104px;top:286px;width:91px;height:26px;border-radius:2.500px;background:#40bffa"><svg class="abs" style="left:10px;top:5.600px" width="14" height="15" viewBox="0 0 14 15"><path d="M.6.900c0-.6.500-.9 1-.6l10.900 6c.5.300.5.900 0 1.200L1.600 13.700c-.5.300-1 0-1-.6z" fill="#fff"/><path d="M.9.600l8 9.200M.9 14l8-9.300" stroke="#40bffa" stroke-width=".8" fill="none"/></svg><span class="t" style="left:29px;top:3.27px;font-size:7px;color:#d9f1fe;--sx:.967">Tải ngay trên</span><span class="t" style="left:29px;top:12.100px;font-size:10px;color:#fff;--sx:.958">Google Play</span></div><svg class="abs" style="left:118.500px;top:126px" width="7" height="10" viewBox="0 0 7 10"><path d="M.6.600v7.400l1.700-1.500 1.200 2.700 1-.5-1.200-2.600h2.300z" fill="#111" stroke="#fff" stroke-width=".5"/></svg></div>
</body>
</html>
